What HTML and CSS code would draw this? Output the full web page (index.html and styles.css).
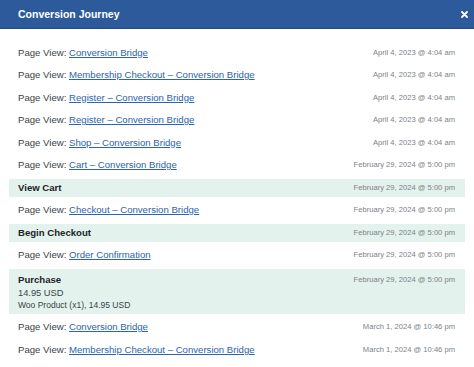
FILE: index.html
```html
<!DOCTYPE html>
<html lang="en">

<head>
    <meta charset="UTF-8">
    <link rel="stylesheet" href="styles.css">
</head>

<body>
    <div class="modal">
        <div class="modal-header">
            <h2>Conversion Journey</h2>
            <svg class="close" width="7" height="7" viewBox="0 0 7 7">
                <path d="M1 1L6 6M6 1L1 6" stroke="#fff" stroke-width="1.8" stroke-linecap="round"/>
            </svg>
        </div>

        <div class="journey">
            <div class="step">
                <div class="label">Page View: <a href="#">Conversion Bridge</a></div>
                <div class="date">April 4, 2023 @ 4:04 am</div>
            </div>
            <div class="step">
                <div class="label">Page View: <a href="#">Membership Checkout – Conversion Bridge</a></div>
                <div class="date">April 4, 2023 @ 4:04 am</div>
            </div>
            <div class="step">
                <div class="label">Page View: <a href="#">Register – Conversion Bridge</a></div>
                <div class="date">April 4, 2023 @ 4:04 am</div>
            </div>
            <div class="step">
                <div class="label">Page View: <a href="#">Register – Conversion Bridge</a></div>
                <div class="date">April 4, 2023 @ 4:04 am</div>
            </div>
            <div class="step">
                <div class="label">Page View: <a href="#">Shop – Conversion Bridge</a></div>
                <div class="date">April 4, 2023 @ 4:04 am</div>
            </div>
            <div class="step">
                <div class="label">Page View: <a href="#">Cart – Conversion Bridge</a></div>
                <div class="date">February 29, 2024 @ 5:00 pm</div>
            </div>
            <div class="step event">
                <div class="label">View Cart</div>
                <div class="date">February 29, 2024 @ 5:00 pm</div>
            </div>
            <div class="step">
                <div class="label">Page View: <a href="#">Checkout – Conversion Bridge</a></div>
                <div class="date">February 29, 2024 @ 5:00 pm</div>
            </div>
            <div class="step event">
                <div class="label">Begin Checkout</div>
                <div class="date">February 29, 2024 @ 5:00 pm</div>
            </div>
            <div class="step">
                <div class="label">Page View: <a href="#">Order Confirmation</a></div>
                <div class="date">February 29, 2024 @ 5:00 pm</div>
            </div>
            <div class="step event purchase">
                <div class="label">
                    Purchase
                    <div class="amount">14.95 USD</div>
                    <div class="items">Woo Product (x1), 14.95 USD</div>
                </div>
                <div class="date">February 29, 2024 @ 5:00 pm</div>
            </div>
            <div class="step">
                <div class="label">Page View: <a href="#">Conversion Bridge</a></div>
                <div class="date">March 1, 2024 @ 10:46 pm</div>
            </div>
            <div class="step">
                <div class="label">Page View: <a href="#">Membership Checkout – Conversion Bridge</a></div>
                <div class="date">March 1, 2024 @ 10:46 pm</div>
            </div>
        </div>
    </div>
</body>

</html>
```

FILE: styles.css
```css
body,
html {
    margin: 0;
    background: #fff;
    font-family: "Liberation Sans", Arial, sans-serif;
    color: #3c434a;
}

.modal {
    width: 474px;
}

.modal-header {
    display: flex;
    justify-content: space-between;
    align-items: center;
    height: 28px;
    padding: 0 6px 0 18px;
    background-color: #2c5a9b;
    border-bottom: 1px solid #23497f;
}

.modal-header h2 {
    margin: 0;
    font-size: 10.5px;
    font-weight: bold;
    color: #fff;
}

.close {
    display: block;
}

.journey {
    display: flex;
    flex-direction: column;
    gap: 4.5px;
    padding: 14.5px 9px;
}

.step {
    display: flex;
    justify-content: space-between;
    align-items: flex-start;
    padding: 2px 10px 2px 9px;
    line-height: 14px;
    font-size: 9.6px;
}

.step a {
    color: #2c64ad;
}

.event {
    background-color: #e3f2ec;
}

.event .label {
    font-weight: bold;
    color: #1d2327;
}

.purchase {
    padding-top: 3px;
    padding-bottom: 3px;
    line-height: 15px;
}

.amount {
    font-weight: normal;
    font-size: 9.3px;
    line-height: 13px;
    color: #3c434a;
}

.items {
    font-weight: normal;
    font-size: 8.5px;
    line-height: 11px;
    color: #3c434a;
}

.date {
    font-size: 7.6px;
    color: #7d8187;
}
```
